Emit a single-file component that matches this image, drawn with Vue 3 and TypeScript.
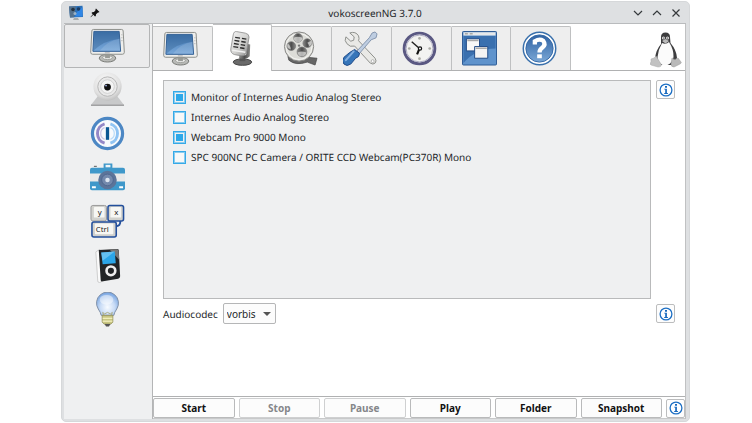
<script setup lang="ts">
import { ref } from 'vue'

interface AudioSource {
  id: string
  name: string
  active: boolean
}

interface Action {
  label: string
  disabled: boolean
}

const sources = ref<AudioSource[]>([
  { id: 'monitor', name: 'Monitor of Internes Audio Analog Stereo', active: true },
  { id: 'internal', name: 'Internes Audio Analog Stereo', active: false },
  { id: 'webcam', name: 'Webcam Pro 9000 Mono', active: true },
  { id: 'spc', name: 'SPC 900NC PC Camera / ORITE CCD Webcam(PC370R) Mono', active: false },
])

const actions: Action[] = [
  { label: 'Start', disabled: false },
  { label: 'Stop', disabled: true },
  { label: 'Pause', disabled: true },
  { label: 'Play', disabled: false },
  { label: 'Folder', disabled: false },
  { label: 'Snapshot', disabled: false },
]

const sections = ['screen', 'webcam', 'magnifier', 'camera', 'keys', 'player', 'hint']
const tabs = ['screen', 'mic', 'film', 'tools', 'clock', 'windows', 'help']
const section = ref('screen')
const tab = ref('mic')
const codec = ref('vorbis')
</script>

<template>
  <div class="window">
    <header class="titlebar">
      <div class="title-left">
        <svg class="logo" viewBox="0 0 16 16">
          <path d="M1 1.500 14.500 .8 15 12 2 12.500Z" fill="#2c6fb5" />
          <path d="M1 1.500 8 1.200 6 12.300 2 12.500Z" fill="#55718c" />
          <path d="M9 7 14.500 2v9.500H7Z" fill="#2f86e6" />
          <circle cx="5" cy="4.500" r="1.800" fill="#26333f" />
          <circle cx="10.500" cy="4" r="1.800" fill="#1c3d63" />
          <circle cx="7" cy="8.500" r="1.500" fill="#9cb4c9" />
          <path d="M6 13h4l1 2H5Z" fill="#a7abae" />
        </svg>
        <svg class="pin" viewBox="0 0 10 10">
          <path d="M6 .5 9.500 4 8.500 4.600 8 4.400 6 6.200 5.800 8 5 8.500 3.300 6.800 .8 9.300.5 9 2.800 6.300 1.500 5 2.200 4.200 4 4 5.700 2 5.400 1.300Z" fill="#111" />
        </svg>
      </div>
      <h1>vokoscreenNG 3.7.0</h1>
      <div class="title-right">
        <button aria-label="Minimize"><svg viewBox="0 0 10 10"><path d="m1 3 4 4 4-4" /></svg></button>
        <button aria-label="Maximize"><svg viewBox="0 0 10 10"><path d="m1 7 4-4 4 4" /></svg></button>
        <button aria-label="Close"><svg viewBox="0 0 10 10"><path d="m1.500 1.500 7 7m0-7-7 7" /></svg></button>
      </div>
    </header>

    <svg class="symbols" aria-hidden="true">
      <defs>
        <linearGradient id="glass" x1="0" y1="0" x2="0" y2="1">
          <stop offset="0" stop-color="#4478b3" /><stop offset="1" stop-color="#78a8da" />
        </linearGradient>
        <linearGradient id="metal" x1="0" y1="0" x2="1" y2="1">
          <stop offset="0" stop-color="#f4f4f4" /><stop offset=".55" stop-color="#d2d2d0" /><stop offset="1" stop-color="#8a8a8a" />
        </linearGradient>
        <linearGradient id="dark" x1="0" y1="0" x2="1" y2="0">
          <stop offset="0" stop-color="#8c8c8a" /><stop offset=".5" stop-color="#4c4c4c" /><stop offset="1" stop-color="#8c8c8a" />
        </linearGradient>
        <linearGradient id="blue" x1="0" y1="0" x2="0" y2="1">
          <stop offset="0" stop-color="#2f62a3" /><stop offset="1" stop-color="#7ba8d6" />
        </linearGradient>
        <radialGradient id="ball" cx=".45" cy=".35" r=".7">
          <stop offset="0" stop-color="#fff" /><stop offset=".7" stop-color="#e0e0e0" /><stop offset="1" stop-color="#b8b8b8" />
        </radialGradient>
        <radialGradient id="bulb" cx=".5" cy=".65" r=".65">
          <stop offset="0" stop-color="#f8fbff" /><stop offset=".5" stop-color="#c9dcf6" /><stop offset="1" stop-color="#6f9fdf" />
        </radialGradient>
      </defs>
      <symbol id="screen" viewBox="0 0 36 36">
        <ellipse cx="18" cy="31" rx="8.500" ry="4" fill="#b9bab7" stroke="#777975" />
        <ellipse cx="18" cy="30.500" rx="5" ry="2" fill="#efefed" stroke="#888a85" stroke-width=".7" />
        <path d="M15.500 26h5v5h-5Z" fill="#999b97" />
        <path d="M3.500 1.500h29q1.500 0 1.600 1.500l1.200 22q0 2-2 2H2.700q-2 0-2-2L1.900 3q.1-1.500 1.600-1.500Z" fill="#eeeeec" stroke="#8b8d89" />
        <path d="M4 3.500h26l1.500 20.500H3Z" fill="url(#glass)" stroke="#2f5e94" />
        <path d="M4.500 4h25l.5 7Q14 13 4 23Z" fill="#235282" opacity=".3" />
        <path d="M30.500 11Q18 13 10 23.500h21Z" fill="#fff" opacity=".13" />
        <path d="M32.300 7h1m-1 3h1m-1 3h1m-18 12.600h5" stroke="#aaa" />
      </symbol>
      <symbol id="info" viewBox="0 0 14 14">
        <circle cx="7" cy="7" r="5.900" fill="#fff" stroke="#1c6fc4" stroke-width="1.300" />
        <path d="M6 3h2v1.700H6ZM5.200 5.700h2.700v4.200h1v1H5.200v-1h1V6.600h-1Z" fill="#1668be" />
      </symbol>
    </svg>

    <div class="body">
      <nav class="sidebar">
        <button
          v-for="name in sections"
          :key="name"
          :class="{ active: section === name }"
          :aria-label="name"
          @click="section = name"
        >
          <svg class="icon" viewBox="0 0 36 36">
            <use v-if="name === 'screen'" href="#screen" />
            <g v-else-if="name === 'webcam'">
              <path d="M8 25h20l7 9H1Z" fill="#c8c9ca" />
              <path d="M1 33.300h34V35H1Z" fill="#a1a2a3" />
              <circle cx="18" cy="15" r="14.500" fill="url(#ball)" />
              <circle cx="18" cy="15" r="10" fill="#e9e9e9" stroke="#b5b5b5" />
              <circle cx="18" cy="15" r="7" fill="#f4f4f4" stroke="#cfcfcf" />
              <circle cx="18" cy="15.500" r="3.500" fill="#111" />
              <circle cx="16.500" cy="14" r="1" fill="#9ad" />
            </g>
            <g v-else-if="name === 'magnifier'" fill="none">
              <circle cx="18" cy="18" r="15.500" fill="#f8fafc" stroke="#4c87c4" stroke-width="3.300" />
              <path d="M15 8A10.500 10.500 0 0 0 15 28" stroke="#9488c7" stroke-width="3" />
              <path d="M21 8A10.500 10.500 0 0 1 21 28" stroke="#90c4f3" stroke-width="3" />
              <path d="M15 12a6.500 6.500 0 0 0 0 12" stroke="#cbc6e5" stroke-width="1.300" />
              <path d="M21 12a6.500 6.500 0 0 1 0 12" stroke="#bbddf9" stroke-width="1.300" />
              <path d="M16.300 11.500h3.400v13h-3.400Z" fill="#0a5792" />
            </g>
            <g v-else-if="name === 'camera'">
              <path d="M14 8V3.500h9V8h11q2 0 2 2v6H0v-6q0-2 2-2Z" fill="#3f98ca" />
              <path d="M16 5h5v2.500h-5Z" fill="#eef5f9" />
              <path d="M0 14h36v9H0Z" fill="#e8e9e9" />
              <path d="M0 22h36v7q0 2-2 2H2q-2 0-2-2Z" fill="#3f98ca" />
              <path d="M2 27h4v2H2Zm28 0h4v2h-4Z" fill="#fff" />
              <path d="M4 6h3v1H4Z" fill="#555" />
              <circle cx="18" cy="20.500" r="9.500" fill="#5c7499" />
              <circle cx="18" cy="20.500" r="6" fill="#7389ac" stroke="#4d668e" />
              <circle cx="18" cy="20.500" r="2.300" fill="#dce5f0" />
            </g>
            <g v-else-if="name === 'keys'" class="keycaps">
              <path d="M31 17q1 6-5 6" fill="none" stroke="#234f9c" stroke-width="2" />
              <rect x="1" y="1.500" width="16" height="16" rx="2" fill="#d1d1cd" stroke="#999" />
              <rect x="4" y="3" width="11" height="11" rx="1" fill="#f7f7f4" />
              <rect x="18.500" y="1.500" width="16" height="16" rx="2" fill="#d1d1cd" stroke="#234f9c" stroke-width="1.600" />
              <rect x="21" y="3" width="11" height="11" rx="1" fill="#f7f7f4" />
              <rect x="2" y="18.500" width="25" height="15.500" rx="2" fill="#d1d1cd" stroke="#234f9c" stroke-width="1.600" />
              <rect x="5" y="20" width="19" height="11" rx="1" fill="#f7f7f4" />
              <text x="8" y="11">y</text><text x="25" y="11">x</text><text x="6" y="29">Ctrl</text>
            </g>
            <g v-else-if="name === 'player'">
              <path d="M6 4 10 1.500 13 34 10 35.500Q8 35.500 8 34Z" fill="#fafafa" stroke="#bbb" stroke-width=".7" />
              <path d="M9 2 28 1q1.500 0 1.600 1.500L31 29q0 2-2 2.500L12 34.500Q11 34.500 11 33Z" fill="#222426" />
              <path d="m20 1.500 8-.3q1.300.3 1.400 1.500L30 12Z" fill="#777" />
              <path d="m11.500 4.500 14-.8 1 12-13.500 1Z" fill="#2ba5e7" />
              <path d="m11.500 4.500 14-.8L13 13Z" fill="#8bd2f6" opacity=".6" />
              <circle cx="21.500" cy="23.500" r="4.500" fill="none" stroke="#eee" stroke-width="2.700" />
            </g>
            <g v-else>
              <path d="M11.500 24Q11 21 8.500 17.500A11.300 11.300 0 1 1 27.500 17.500Q25 21 24.500 24Z" fill="url(#bulb)" stroke="#7f8ea5" />
              <ellipse cx="17" cy="8" rx="7" ry="5" fill="#fff" opacity=".45" />
              <path d="m14 24-1-3 2 1.500 3-1.500 3 1.500 2-1.500-1 3" fill="none" stroke="#a9aa83" />
              <path d="M12.500 24h11v7l-2 2h-7l-2-2Z" fill="#c8c683" stroke="#8a884f" stroke-width=".7" />
              <path d="M13 27h10M13 30h10" stroke="#fffbd0" />
              <path d="M15 33h6l-1.500 2.500h-3Z" fill="#555" />
            </g>
          </svg>
        </button>
      </nav>

      <main class="main">
        <div class="tabbar">
          <div class="tabs" role="tablist">
            <button
              v-for="name in tabs"
              :key="name"
              role="tab"
              :aria-label="name"
              :aria-selected="tab === name"
              :class="{ selected: tab === name }"
              @click="tab = name"
            >
              <svg class="icon" viewBox="0 0 36 36">
                <use v-if="name === 'screen'" href="#screen" />
                <g v-else-if="name === 'mic'">
                  <ellipse cx="20" cy="32" rx="9.500" ry="3.300" fill="#6a6a6a" stroke="#444" />
                  <path d="M17 25h6v6h-6Z" fill="#555" />
                  <path d="m24 13 4 1-.5 12q-3 4-11 2l1-3q6 1 6.500-1Z" fill="url(#dark)" />
                  <path d="m14 .6 9 1.600q4 1 3.800 4L24.500 20.500Q23.500 26 18.500 25.500L12 24.300Q7.500 23 8 18.500L10.500 4q.7-4 3.500-3.400Z" fill="url(#metal)" stroke="#888" stroke-width=".8" />
                  <path d="m12.500 6.500 5 .8m2 .3 4.500.8M11.800 9.700l5 .8m2 .3 4.500.8M11.200 12.900l5 .8m2 .3 4.500.8M10.600 16.100l5 .8m2 .3 4.500.8" stroke="#2a2a2a" stroke-width="1.400" />
                  <path d="m9.500 19.700 13.500 2.200" stroke="#f2f2f2" stroke-width="1.600" />
                </g>
                <g v-else-if="name === 'film'">
                  <path d="M5 26q9 8 20 1l10 1-2 7-8-3q-12 4-19-2Z" fill="#666" stroke="#444" stroke-width=".7" />
                  <circle cx="16.500" cy="16" r="15" fill="#ddddd8" stroke="#858583" />
                  <circle cx="16.500" cy="16" r="13.300" fill="none" stroke="#f6f6f4" />
                  <g fill="url(#dark)" stroke="#777" stroke-width=".7">
                    <circle cx="15.500" cy="7" r="4.500" /><circle cx="25" cy="12.500" r="4.500" />
                    <circle cx="8.500" cy="15.500" r="4.500" /><circle cx="19.500" cy="21.500" r="5" />
                  </g>
                  <g fill="#f7f7f5" opacity=".6">
                    <path d="M11 7q4-2 9 0a4.500 4.500 0 0 1-9 0Z" /><path d="M5 13q3 2 3 6-5-2-3-6Z" />
                    <path d="M25 12q2 2 2 4 4-3 2-6Z" /><path d="M15 22q4-2 9 0-1 4-5 4-3 0-4-4Z" />
                  </g>
                  <circle cx="16.500" cy="15" r="1.200" fill="#777" />
                </g>
                <g v-else-if="name === 'tools'">
                  <path d="M3 6 8 10.500l3-1 .5-3.500L7 2q6-2 9 3 1 3 0 5l17 18q2 3 0 5t-5 0L12 15.500Q7 17 4 13 1 10 3 6Z" fill="#e9e9e6" stroke="#8b8d89" />
                  <circle cx="30.500" cy="31" r="1.500" fill="#fff" stroke="#999" stroke-width=".7" />
                  <path d="m27 7 3-5 3-1 2 2-1 4-5 2-12 14-3-2Z" fill="#becde1" stroke="#8294ad" />
                  <path d="m12 19 5 4q0 4-4 5l-5 6q-4 3-7 0t0-7l6-5Z" fill="#3675b9" stroke="#204a87" />
                  <path d="m3 30 8-9" stroke="#85b0e1" stroke-width="2" stroke-linecap="round" />
                </g>
                <g v-else-if="name === 'clock'">
                  <circle cx="18" cy="18" r="15.800" fill="#f3f3f1" stroke="#5a5882" stroke-width="3" />
                  <circle cx="18" cy="18" r="13.800" fill="none" stroke="#aaa9c0" />
                  <g fill="#aaaaa5"><circle cx="18" cy="7.500" r="1.400" /><circle cx="28.500" cy="18" r="1.400" /><circle cx="18" cy="28.500" r="1.400" /><circle cx="7.500" cy="18" r="1.400" /></g>
                  <path d="m18 18-8-7" stroke="#222" stroke-width="1.500" />
                  <path d="m18 18-2.500 6" stroke="#111" stroke-width="2.200" />
                  <circle cx="18.500" cy="18" r="1.700" fill="#eee" stroke="#111" stroke-width="1.200" />
                </g>
                <g v-else-if="name === 'windows'">
                  <rect x=".5" y=".5" width="35" height="34.500" rx="1" fill="#5f93cc" stroke="#2c5a94" />
                  <path d="M1.500 5h33v13Q14 18 1.500 33Z" fill="#3a70af" />
                  <path d="M1.500 1.200h33V4.500h-33Z" fill="#e6e8ea" />
                  <path d="M3 2h3v1.500H3Zm5 0h3v1.500H8Z" fill="#a9aaa8" />
                  <path d="M4.500 8H18v12.500H4.500Z" fill="#f8f8f8" stroke="#204a87" /><path d="M5.500 9H17v1.500H5.500Z" fill="#aaa" />
                  <path d="M13 16h13.500v12H13Z" fill="#f4f4f4" stroke="#204a87" /><path d="M14 17h11.500v1.500H14Z" fill="#aaa" />
                </g>
                <g v-else>
                  <circle cx="18" cy="18" r="16.700" fill="#fff" stroke="#3970ac" stroke-width="1.500" />
                  <circle cx="18" cy="18" r="14" fill="url(#blue)" stroke="#3468a6" />
                  <path d="M13.200 14v-3.500Q18 7.500 21.800 10q3 4-.8 7-3 2-3 5" fill="none" stroke="#fff" stroke-width="4.400" />
                  <path d="M15.600 24h4.800v4h-4.800Z" fill="#fff" />
                </g>
              </svg>
            </button>
          </div>
          <svg class="tux" viewBox="0 0 32 36">
            <path d="M11 5q0-4.500 4.500-4.500T20 5l.5 6q6 7 6.500 15l-5 7H9l-4-7q1-8 6-14Z" fill="#3d3d3f" />
            <path d="M12 11q4 2 7-1 5 8 4.500 15-1 6-6 8h-5q-5-3-5-8 1-8 4.500-14Z" fill="#fbfbfb" />
            <circle cx="13.500" cy="6" r="1.600" fill="#ddd" /><circle cx="17.500" cy="6" r="1.600" fill="#ddd" />
            <circle cx="13.800" cy="6" r=".6" fill="#111" /><circle cx="17.300" cy="6" r=".6" fill="#111" />
            <path d="m12 9 3.500-2L19 9l-3.500 2.500Z" fill="#bcbcbc" />
            <path d="m6 24 5 8q1 3-3 3l-7-2q-2-1 0-3v-3l3-1Z" fill="#c2c2c2" stroke="#aaa" stroke-width=".5" />
            <path d="M22 26q3 3 6 0l3 4q1 1-1 2l-6 3q-3 0-3-3Z" fill="#b9b9b9" stroke="#999" stroke-width=".5" />
          </svg>
        </div>

        <section class="pane" role="tabpanel">
          <div class="row grow">
            <div class="sources">
              <label v-for="source in sources" :key="source.id" class="source">
                <input v-model="source.active" type="checkbox" />
                <span>{{ source.name }}</span>
              </label>
            </div>
            <button class="info" aria-label="Audio information"><svg><use href="#info" /></svg></button>
          </div>
          <div class="row codec-row">
            <div class="codec">
              <label for="codec">Audiocodec</label>
              <span class="select">
                <select id="codec" v-model="codec">
                  <option>vorbis</option>
                </select>
                <svg viewBox="0 0 8 4"><path d="M0 0h8L4 4Z" fill="#555" /></svg>
              </span>
            </div>
            <button class="info" aria-label="Codec information"><svg><use href="#info" /></svg></button>
          </div>
        </section>

        <footer class="actions">
          <button v-for="action in actions" :key="action.label" class="action" :disabled="action.disabled">
            {{ action.label }}
          </button>
          <button class="info" aria-label="Recording information"><svg><use href="#info" /></svg></button>
        </footer>
      </main>
    </div>
  </div>
</template>

<style>
body {
  margin: 0;
  background: #fff;
}
</style>

<style scoped>
* {
  box-sizing: border-box;
}

button {
  margin: 0;
  padding: 0;
  border: 0;
  background: none;
  font: inherit;
  color: inherit;
}

svg {
  display: block;
}

.window {
  display: flex;
  flex-direction: column;
  min-height: calc(100vh - 2px);
  margin: 1px 62px 0 61px;
  padding: 0 3px 2px 2px;
  border: 1px solid #d6d8da;
  border-radius: 5px;
  background: #dee0e2;
  font-family: "Noto Sans", sans-serif;
  font-size: 10px;
  line-height: 16px;
  text-rendering: geometricPrecision;
  color: #232629;
}

.titlebar {
  display: grid;
  grid-template-columns: 1fr auto 1fr;
  align-items: center;
  height: 21px;
}

.title-left {
  display: flex;
  align-items: center;
  gap: 6px;
  padding-left: 4px;
}

.logo {
  width: 16px;
  height: 16px;
}

.pin {
  width: 10px;
  height: 10px;
}

h1 {
  margin: 0;
  font-size: 10px;
  font-weight: 400;
}

.title-right {
  display: flex;
  justify-content: flex-end;
  gap: 9px;
  padding-right: 5px;
}

.title-right svg {
  width: 10px;
  height: 10px;
  fill: none;
  stroke: #35393c;
  stroke-width: 1.2;
}

.symbols {
  position: absolute;
  width: 0;
  height: 0;
}

.body {
  display: flex;
  flex: 1;
  border-top: 1px solid #b9bbbd;
}

.sidebar {
  display: flex;
  flex-direction: column;
  flex: none;
  width: 88px;
  padding-right: 2px;
  background: #eff0f1;
}

.sidebar button {
  display: grid;
  place-items: center;
  height: 44px;
  padding-bottom: 2px;
  border: 1px solid transparent;
  border-radius: 2px;
}

.sidebar button.active {
  border-color: #b4b5b6;
  background: #ebebec;
}

.icon {
  width: 35px;
  height: 35px;
}

.keycaps text {
  font-size: 8px;
  fill: #222;
}

.main {
  display: flex;
  flex: 1;
  flex-direction: column;
  min-width: 0;
  border-left: 1px solid #b4b5b6;
  border-right: 1px solid #c0c1c2;
  background: #fff;
}

.tabbar {
  display: flex;
  align-items: flex-end;
  justify-content: space-between;
  height: 47px;
  padding-right: 3px;
  border-bottom: 1px solid #b0b1b2;
}

.tabs {
  display: flex;
  align-items: flex-end;
  width: 418px;
}

.tabs button {
  display: grid;
  flex: 1;
  place-items: center;
  height: 44px;
  padding-right: 3px;
  border: 1px solid #bfc0c1;
  border-left-width: 0;
  border-bottom: 0;
  border-radius: 0 2px 0 0;
  background: #eeeeee;
}

.tabs button.selected {
  height: 47px;
  margin-bottom: -1px;
  background: #fff;
}

.tux {
  width: 32px;
  height: 36px;
  margin-bottom: 2px;
}

.pane {
  display: flex;
  flex: 1;
  flex-direction: column;
  gap: 4px;
  padding: 9px 10px 0 10px;
}

.row {
  display: flex;
  justify-content: space-between;
  gap: 5px;
}

.grow {
  flex: 1;
  max-height: 219px;
}

.sources {
  flex: 1;
  padding: 6px 9px;
  border: 1px solid #b9babb;
  background: #eff0f1;
}

.source {
  display: flex;
  align-items: center;
  gap: 5px;
  height: 20px;
}

.source input {
  appearance: none;
  flex: none;
  width: 13px;
  height: 13px;
  margin: 0;
  border: 1px solid #35aae8;
  background: #f7f8f8;
  box-shadow: inset 0 0 0 1px #8accef;
}

.source input:checked {
  padding: 2px;
  background: #2ea8e8 content-box;
}

.info {
  display: grid;
  flex: none;
  place-items: center;
  width: 19px;
  height: 19px;
  border: 1px solid #bcbdbe;
  border-radius: 2px;
  background: #fdfdfd;
}

.info svg {
  width: 14px;
  height: 14px;
}

.codec-row {
  align-items: center;
}

.codec {
  display: flex;
  align-items: center;
  gap: 5px;
}

.select {
  display: grid;
  align-items: center;
}

.select > * {
  grid-area: 1 / 1;
}

.select svg {
  justify-self: end;
  width: 8px;
  height: 4px;
  margin-right: 5px;
  pointer-events: none;
}

select {
  appearance: none;
  width: 53px;
  height: 21px;
  padding: 0 14px 0 3px;
  border: 1px solid #b5b6b7;
  border-radius: 2px;
  background: #fcfcfc;
  font: inherit;
  color: inherit;
}

.actions {
  display: flex;
  align-items: center;
  gap: 4px;
  height: 23px;
  padding-top: 1px;
  border-top: 1px solid #b0b1b2;
  border-bottom: 1px solid #c8c9ca;
}

.action {
  flex: 1;
  height: 20px;
  border: 1px solid #b9babb;
  border-radius: 2px;
  background: #fcfcfc;
  font-weight: 700;
  color: #111;
}

.action:disabled {
  border-color: #cfd0d1;
  color: #85878a;
}
</style>
